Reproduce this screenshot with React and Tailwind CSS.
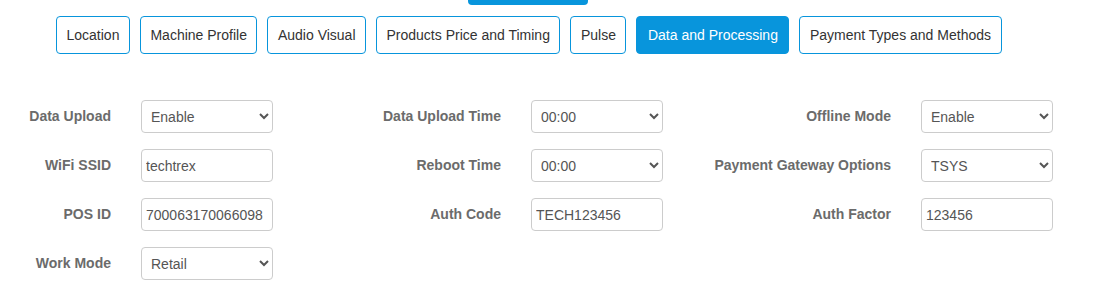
import { useState } from "react";

const tabs = [
  "Location",
  "Machine Profile",
  "Audio Visual",
  "Products Price and Timing",
  "Pulse",
  "Data and Processing",
  "Payment Types and Methods",
];

const hours = ["00:00", "01:00", "02:00", "03:00", "04:00", "05:00", "06:00"];

// each column of the form grid, top to bottom
const columns = [
  [
    { label: "Data Upload", type: "select", value: "Enable", options: ["Enable", "Disable"] },
    { label: "WiFi SSID", type: "input", value: "techtrex" },
    { label: "POS ID", type: "input", value: "700063170066098" },
    { label: "Work Mode", type: "select", value: "Retail", options: ["Retail", "Vending"] },
  ],
  [
    { label: "Data Upload Time", type: "select", value: "00:00", options: hours },
    { label: "Reboot Time", type: "select", value: "00:00", options: hours },
    { label: "Auth Code", type: "input", value: "TECH123456" },
  ],
  [
    { label: "Offline Mode", type: "select", value: "Enable", options: ["Enable", "Disable"] },
    { label: "Payment Gateway Options", type: "select", value: "TSYS", options: ["TSYS", "Moneris"] },
    { label: "Auth Factor", type: "input", value: "123456" },
  ],
];

function Field({ field }) {
  const [value, setValue] = useState(field.value);
  const base =
    "w-[132px] h-[33px] rounded border border-[#ccc] bg-white text-[14px] text-[#555] outline-none";

  return (
    <div className="flex items-center gap-[30px] h-[33px]">
      <div className="w-[111px] flex justify-end shrink-0">
        <span className="whitespace-nowrap text-[14px] font-bold text-[#6b6b6b]">{field.label}</span>
      </div>
      {field.type === "select" ? (
        <select
          value={value}
          onChange={(e) => setValue(e.target.value)}
          className={`${base} pl-[5px] pr-[4px]`}
        >
          {field.options.map((o) => (
            <option key={o}>{o}</option>
          ))}
        </select>
      ) : (
        <input
          value={value}
          onChange={(e) => setValue(e.target.value)}
          className={`${base} px-[4px]`}
        />
      )}
    </div>
  );
}

export default function App() {
  const [active, setActive] = useState("Data and Processing");

  return (
    <div className="w-[1106px] h-[293px] bg-white overflow-hidden" style={{ fontFamily: '"Liberation Sans", Arial, sans-serif' }}>
      {/* tail of the button above */}
      <div className="ml-[468px] w-[120px] h-[5px] bg-[#0895dc] rounded-b-[4px]" />

      {/* Tabs */}
      <div className="flex gap-[10px] pl-[56px] mt-[11px]">
        {tabs.map((t) => (
          <button
            key={t}
            onClick={() => setActive(t)}
            className={
              active === t
                ? "h-[38px] px-[10.5px] rounded-[4px] border border-[#0895dc] bg-[#0895dc] text-white text-[14px]"
                : "h-[38px] px-[9.5px] rounded-[4px] border border-[#0895dc] bg-white text-[#333] text-[14px]"
            }
          >
            {t}
          </button>
        ))}
      </div>

      {/* Form */}
      <div className="grid grid-cols-[390px_390px_390px] mt-[46px]">
        {columns.map((col, i) => (
          <div key={i} className="flex flex-col gap-[16px]">
            {col.map((f) => (
              <Field key={f.label} field={f} />
            ))}
          </div>
        ))}
      </div>
    </div>
  );
}
